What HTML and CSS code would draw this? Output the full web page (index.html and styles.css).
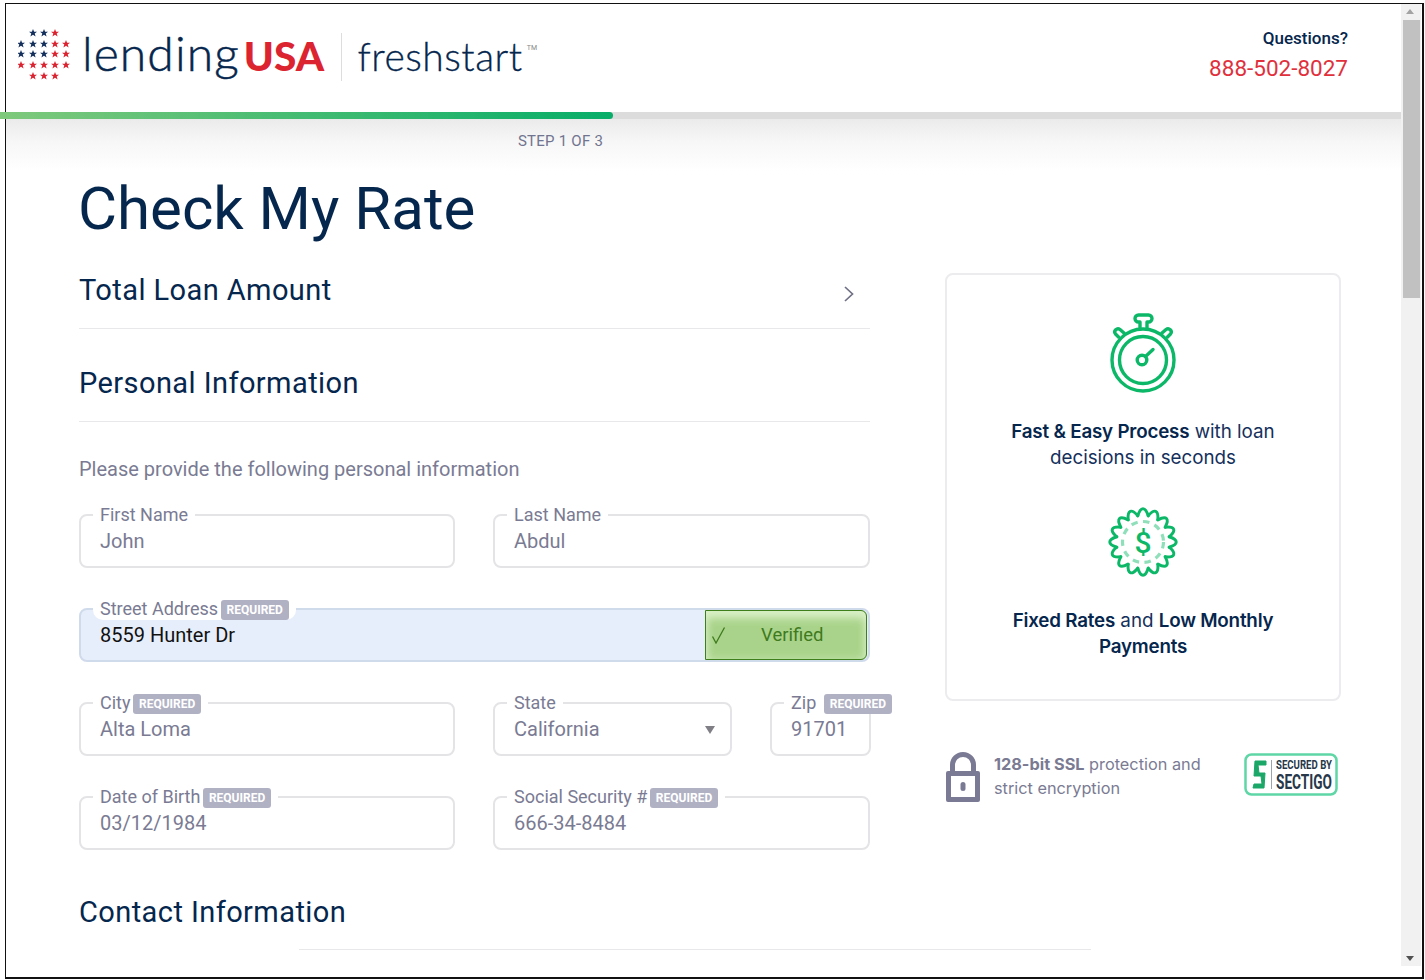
FILE: index.html
```html
<!DOCTYPE html>
<html lang="en">
<head>
<meta charset="utf-8">
<title>Check My Rate</title>
<link rel="stylesheet" href="styles.css">
</head>
<body>
<div class="frame">
  <div class="page">
    <header class="topbar">
      <div class="brand">
        <svg class="stars" width="54" height="52" viewBox="0 0 54 52">
          <defs><polygon id="st" points="0,-4 1.1,-1.2 4,-1.2 1.700,0.5 2.600,3.500 0,1.800 -2.600,3.500 -1.700,0.5 -4,-1.200 -1.100,-1.200"/></defs>
          <g class="navy"><use href="#st" x="15" y="4"/><use href="#st" x="26" y="4"/><use href="#st" x="3" y="15"/><use href="#st" x="15" y="15"/><use href="#st" x="26" y="15"/><use href="#st" x="3" y="25"/><use href="#st" x="15" y="25"/><use href="#st" x="26" y="25"/></g>
          <g class="red"><use href="#st" x="37" y="4"/><use href="#st" x="37" y="15"/><use href="#st" x="48" y="15"/><use href="#st" x="37" y="25"/><use href="#st" x="48" y="25"/><use href="#st" x="3" y="36"/><use href="#st" x="15" y="36"/><use href="#st" x="26" y="36"/><use href="#st" x="37" y="36"/><use href="#st" x="48" y="36"/><use href="#st" x="15" y="47"/><use href="#st" x="26" y="47"/><use href="#st" x="37" y="47"/></g>
        </svg>
        <span class="lending">lending</span><span class="usa">USA</span>
        <span class="brand-sep"></span>
        <span class="fresh">freshstart</span><span class="tm">TM</span>
      </div>
      <div class="contact">
        <div class="questions">Questions?</div>
        <div class="phone">888-502-8027</div>
      </div>
    </header>
    <div class="progress"><div class="progress-fill"></div></div>
    <div class="shade">
      <div class="step">STEP 1 OF 3</div>
    </div>
    <main class="content">
      <h1 class="title">Check My Rate</h1>
      <div class="columns">
        <section class="form">
          <div class="section-head">
            <h2>Total Loan Amount</h2>
            <svg class="chev" width="12" height="18" viewBox="0 0 12 18"><path d="M2 2l7.500 7L2 16" fill="none" stroke="#6f7085" stroke-width="1.700"/></svg>
          </div>
          <div class="section-head personal"><h2>Personal Information</h2></div>
          <p class="hint">Please provide the following personal information</p>
          <div class="fields">
            <div class="row two">
              <div class="field"><div class="lbl">First Name</div><div class="val">John</div></div>
              <div class="field"><div class="lbl">Last Name</div><div class="val">Abdul</div></div>
            </div>
            <div class="row">
              <div class="field active">
                <div class="lbl">Street Address <span class="req">REQUIRED</span></div>
                <div class="val">8559 Hunter Dr</div>
                <div class="verified">
                  <svg class="tick" width="16" height="18" viewBox="0 0 16 18"><path d="M1.500 10.500L5 17L13.500 1.500" fill="none" stroke="#3f7a1e" stroke-width="1.300"/></svg>
                  <span class="vtext">Verified</span>
                </div>
              </div>
            </div>
            <div class="row three">
              <div class="field"><div class="lbl">City <span class="req">REQUIRED</span></div><div class="val">Alta Loma</div></div>
              <div class="field"><div class="lbl">State</div><div class="val">California</div><span class="caret"></span></div>
              <div class="field"><div class="lbl">Zip <span class="req req-zip">REQUIRED</span></div><div class="val">91701</div></div>
            </div>
            <div class="row two">
              <div class="field"><div class="lbl">Date of Birth <span class="req">REQUIRED</span></div><div class="val">03/12/1984</div></div>
              <div class="field"><div class="lbl">Social Security # <span class="req">REQUIRED</span></div><div class="val">666-34-8484</div></div>
            </div>
          </div>
        </section>
        <aside class="side">
          <div class="card">
            <svg class="ico-watch" width="70" height="85" viewBox="0 0 70 85" fill="none" stroke="#0cb868" stroke-width="3.400" stroke-linecap="round" stroke-linejoin="round">
              <g transform="translate(0 3)">
                <circle cx="35" cy="47" r="31"/>
                <circle cx="35" cy="47" r="23.500"/>
                <circle cx="34" cy="47" r="4.800"/>
                <path d="M37.500 43.500L45 36.500"/>
              </g>
              <path d="M32 19v-7h-1.500a3.500 3.500 0 0 1 0-7h10a3.500 3.500 0 0 1 0 7H39v7"/>
              <g transform="translate(0 2)">
                <path d="M10.500 25l-3-3a3.200 3.200 0 0 1 4.500-4.500l4 3.500"/>
                <path d="M59.500 25l3-3a3.200 3.200 0 0 0-4.500-4.500l-4 3.500"/>
              </g>
            </svg>
            <p class="card-text"><b>Fast &amp; Easy Process</b> with loan decisions in seconds</p>
            <svg class="ico-badge" width="70" height="70" viewBox="-35 -35 70 70" fill="none">
              <defs><path id="tooth" d="M-5.200 -26.200Q-3 -33.200 0 -33.200Q3 -33.200 5.200 -26.200"/></defs>
              <g stroke="#0cb868" stroke-width="3" stroke-linecap="round">
                <use href="#tooth"/><use href="#tooth" transform="rotate(22.5)"/><use href="#tooth" transform="rotate(45)"/><use href="#tooth" transform="rotate(67.5)"/><use href="#tooth" transform="rotate(90)"/><use href="#tooth" transform="rotate(112.5)"/><use href="#tooth" transform="rotate(135)"/><use href="#tooth" transform="rotate(157.5)"/><use href="#tooth" transform="rotate(180)"/><use href="#tooth" transform="rotate(202.5)"/><use href="#tooth" transform="rotate(225)"/><use href="#tooth" transform="rotate(247.5)"/><use href="#tooth" transform="rotate(270)"/><use href="#tooth" transform="rotate(292.5)"/><use href="#tooth" transform="rotate(315)"/><use href="#tooth" transform="rotate(337.5)"/>
              </g>
              <circle r="20.500" stroke="#8fe0ba" stroke-width="3.200" stroke-dasharray="6.500 5.500"/>
              <text class="dollar" x="0" y="10.500" text-anchor="middle">$</text>
            </svg>
            <p class="card-text"><b>Fixed Rates</b> and <b>Low Monthly Payments</b></p>
          </div>
          <div class="secure">
            <svg class="lock" width="36" height="52" viewBox="0 0 36 52">
              <path d="M7.500 24V14a10.500 10.500 0 0 1 21 0v10" fill="none" stroke="#7a7a95" stroke-width="5"/>
              <path fill-rule="evenodd" d="M3 20h30a2 2 0 0 1 2 2v27a2 2 0 0 1-2 2H3a2 2 0 0 1-2-2V22a2 2 0 0 1 2-2zM6 25v21h24V25z" fill="#7a7a95"/>
              <rect x="15.500" y="31" width="5" height="9" rx="2.500" fill="#7a7a95"/>
            </svg>
            <p class="secure-text"><b>128-bit SSL</b> protection and strict encryption</p>
            <svg class="sectigo" width="94" height="43" viewBox="0 0 94 43">
              <rect x="1.500" y="1.500" width="91" height="40" rx="6" fill="#fff" stroke="#5fd6a5" stroke-width="2.500"/>
              <path d="M11 8h11v4h-8l1 8h6l-1 15H9l1-4h8l-1-8h-7z" fill="#1aa768" stroke="#1aa768" stroke-width="1" stroke-linejoin="round"/>
              <rect x="27" y="7" width="1" height="29" fill="#9aa5ad"/>
              <text class="sec1" x="32" y="16" textLength="56" lengthAdjust="spacingAndGlyphs">SECURED BY</text>
              <text class="sec2" x="32" y="36" textLength="56" lengthAdjust="spacingAndGlyphs">SECTIGO</text>
            </svg>
          </div>
        </aside>
      </div>
      <h2 class="contact-title">Contact Information</h2>
      <div class="contact-rule"></div>
    </main>
  </div>
  <div class="scrollbar">
    <div class="sb-up"></div>
    <div class="sb-thumb"></div>
    <div class="sb-space"></div>
    <div class="sb-down"></div>
  </div>
</div>
</body>
</html>
```

FILE: styles.css
```css
* { box-sizing: border-box; }
html, body { margin: 0; height: 100%; background: #fff; overflow: hidden; }
body { padding: 3px 0 0 5px; font-family: Roboto, "Liberation Sans", sans-serif; color: #05264d; }
.frame { width: 1419px; height: 976px; border: 1px solid #111; border-width: 1px 2px 2px 1px; display: flex; align-items: flex-start; background: #fff; position: relative; }
.page { flex: 1; min-width: 0; overflow: visible; }

.topbar { height: 108px; display: flex; justify-content: space-between; padding: 0 53px 0 12px; }
.brand { display: flex; align-items: baseline; padding-top: 20px; height: 108px; position: relative; }
.stars { align-self: flex-start; margin-top: 5px; margin-right: 10px; }
.stars .navy { fill: #14305c; }
.stars .red { fill: #dc2430; }
.lending { font-family: Lato, sans-serif; font-weight: 300; font-size: 48px; line-height: 58px; color: #05264d; letter-spacing: 1.100px; -webkit-text-stroke: .5px #05264d; }
.usa { font-family: Lato, sans-serif; font-weight: 900; font-size: 40.500px; line-height: 58px; color: #dc2430; letter-spacing: .1px; margin-left: 4px; }
.brand-sep { width: 1px; height: 48px; background: #ddd; align-self: flex-start; margin: 9px 15px 0 17px; }
.fresh { font-family: Lato, sans-serif; font-weight: 300; font-size: 39px; line-height: 58px; color: #05264d; letter-spacing: .5px; -webkit-text-stroke: .3px #05264d; }
.tm { font-family: Roboto, sans-serif; font-size: 7px; color: #888; align-self: flex-start; margin: 20px 0 0 4px; }
.contact { text-align: right; padding-top: 24px; }
.questions { font-size: 17px; line-height: 20px; font-weight: 500; color: #05264d; }
.phone { font-size: 22.500px; line-height: 30px; margin-top: 5px; color: #e0303c; }

.progress { height: 7px; margin-left: -6px; background: #dcdcdc; position: relative; }
.progress-fill { height: 7px; width: 613px; background: linear-gradient(90deg, #7fc97c, #07ad68); border-radius: 0 4px 4px 0; }
.shade { height: 52px; background: linear-gradient(#ebebeb, #f7f7f7 45%, #fff); text-align: center; padding: 14px 286px 0 0; }
.step { font-size: 15px; line-height: 17px; letter-spacing: .25px; color: #70748f; }

.content { padding: 0 60px 0 73px; }
.title { margin: 0 0 0 -1px; font-size: 60px; line-height: 70px; font-weight: 400; color: #05264d; height: 103px; padding-top: 3px; }
.columns { display: grid; grid-template-columns: 791px 396px; column-gap: 75px; }
.section-head { display: flex; justify-content: space-between; align-items: center; height: 55px; border-bottom: 1px solid #e8e8ea; padding: 0 15px 22px 0; }
.section-head.personal { height: 93px; padding-top: 30px; padding-bottom: 14px; }
.section-head h2, .contact-title { margin: 0; font-size: 29px; line-height: 36px; font-weight: 400; letter-spacing: .42px; color: #05264d; }
.chev { margin-top: 8px; }
.hint { margin: 35px 0 0; font-size: 20px; line-height: 24px; color: #7a7b93; }
.fields { margin-top: 33px; display: flex; flex-direction: column; gap: 40px; }
.row { display: grid; grid-template-columns: 1fr; column-gap: 38px; }
.row.two { grid-template-columns: 376px 377px; }
.row.three { grid-template-columns: 376px 239px 101px; }
.field { position: relative; height: 54px; border: 2px solid #e4e4e7; border-radius: 8px; padding: 12px 19px 0; }
.lbl { position: absolute; top: -12px; left: 12px; padding: 0 7px; background: #fff; font-size: 18px; line-height: 22px; color: #7a7b93; white-space: nowrap; }
.val { font-size: 20px; line-height: 26px; color: #7a7b93; }
.req { display: inline-block; vertical-align: 1px; background: #b1b1c4; color: #fff; font-size: 12px; line-height: 20px; font-weight: 700; letter-spacing: 0; padding: 0 6px; border-radius: 3px; margin-left: -2px; }
.req-zip { margin-left: 3px; }
.active { background: #e7eefb; border-color: #cfdaeb; }
.active .lbl { border-radius: 0 0 10px 10px; }
.active .val { color: #111; }
.verified { position: absolute; right: 1px; top: 0; bottom: 0; width: 162px; display: flex; align-items: center; background: #a9d38a; border: 1px solid #3f7f1b; border-radius: 0 6px 6px 0; box-shadow: inset 0 7px 9px #d9f0c6, inset 0 0 9px #c4e4ae; color: #3f7a1e; font-size: 18.500px; }
.tick { margin-left: 5px; flex: none; }
.vtext { margin-left: 34px; }
.caret { position: absolute; right: 15px; top: 22px; border: 5.500px solid transparent; border-top: 8px solid #7f7f85; border-bottom: 0; }

.card { height: 428px; margin-top: -1px; border: 2px solid #ececef; border-radius: 8px; padding: 35px 50px 0; display: flex; flex-direction: column; align-items: center; }
.card-text { margin: 0; font-family: Inter, Roboto, sans-serif; font-size: 18.800px; line-height: 26px; text-align: center; color: #14305c; }
.card-text b { font-weight: 600; color: #05264d; letter-spacing: -.2px; }
.ico-watch { margin-bottom: 24px; flex: none; }
.ico-badge { margin-top: 36px; margin-bottom: 31px; flex: none; }
.dollar { font-family: Roboto, sans-serif; font-size: 30px; font-weight: 500; fill: #0cb868; }
.secure { margin-top: 50px; display: flex; align-items: center; }
.lock { flex: none; margin-right: 13px; }
.secure-text { margin: -2px 0 0; width: 238px; font-family: Inter, Roboto, sans-serif; font-size: 16.300px; line-height: 24px; color: #7a7b93; }
.sectigo { flex: none; margin: -5px 0 0 12px; overflow: visible; }
.sec1 { font-family: Roboto, sans-serif; font-size: 12px; font-weight: 700; fill: #27384a; }
.sec2 { font-family: Roboto, sans-serif; font-size: 20px; font-weight: 700; fill: #27384a; }

.contact-title { margin: 44px 0 0; }
.contact-rule { height: 1px; background: #e8e8ea; width: 792px; margin: 19px 0 0 220px; }

.scrollbar { flex: none; width: 20px; height: 962px; margin-right: 1px; background: #f1f1f1; display: flex; flex-direction: column; align-items: center; }
.sb-up, .sb-down { height: 16px; flex: none; width: 100%; position: relative; }
.sb-up::after, .sb-down::after { content: ""; position: absolute; left: 5px; border: 4.500px solid transparent; }
.sb-up::after { top: 5px; border-bottom: 5px solid #a3a3a3; border-top: 0; }
.sb-down::after { bottom: 5px; border-top: 5px solid #505050; border-bottom: 0; }
.sb-thumb { width: 17px; height: 278px; background: #c1c1c1; flex: none; }
.sb-space { flex: 1; }
```
